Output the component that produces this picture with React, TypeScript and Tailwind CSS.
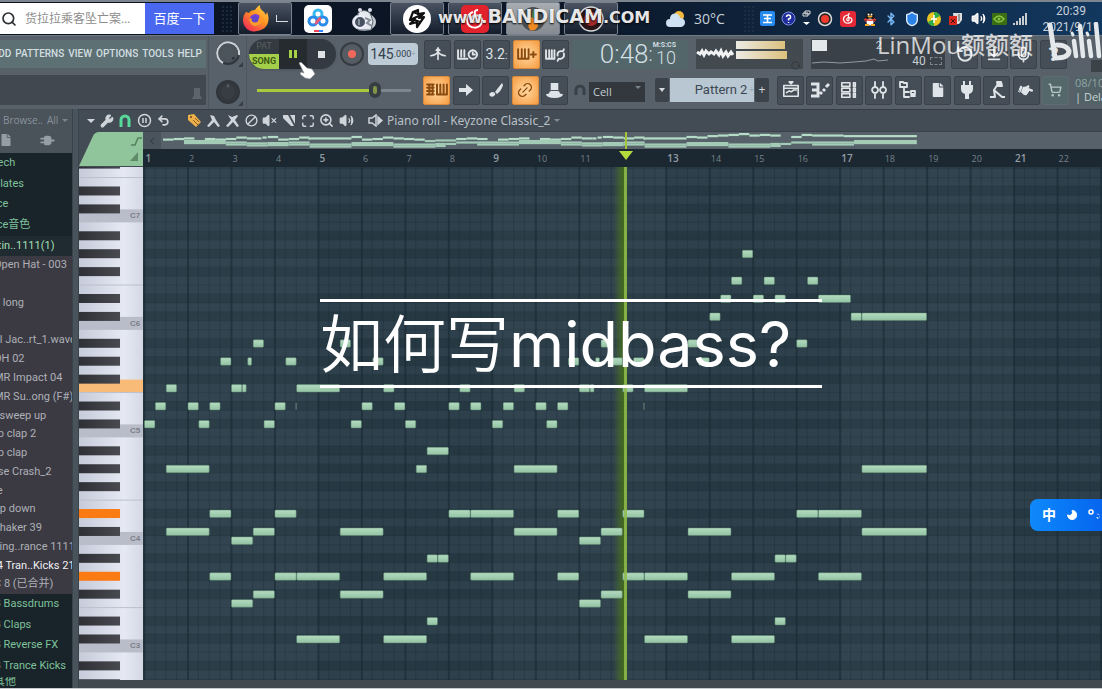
import React from "react";
import {
  Ban, Bluetooth, Circle, ChevronLeft, Link2, Maximize, Mic, Moon, RotateCcw, Search,
  ShoppingCart, Undo2, Volume2, VolumeX, Wrench, ZoomIn, Plug, Shield,
} from "lucide-react";
import { FaFile, FaHandPointRight } from "react-icons/fa";

type Note = [row: number, start: number, length: number];

const ROW = 8.96;
const UNIT = 10.87;
const ORIGIN = 1.5;
const C4_Y = 373.4;

const short = (row: number, starts: number[], length = 1): Note[] => starts.map((s) => [row, s, length]);

const notes: Note[] = [
  ...short(32, [55]),
  ...short(29, [54, 57, 61]),
  ...short(27, [53, 56, 58]), [27, 62, 3],
  ...short(25, [52, 65]), [25, 66, 6],
  ...short(22, [10, 18, 42, 50, 60]),
  ...short(20, [7, 13, 21, 39, 43, 45, 51]), ...short(20, [9.5, 41.5], 0.4),
  ...short(17, [2, 8, 22, 29, 34, 40, 44]), ...short(17, [9, 41], 0.4), ...short(17, [14, 46], 4),
  ...short(15, [1, 4, 6, 12, 20, 23, 28, 30, 33, 36, 38]), ...short(15, [13.9, 45.9], 0.12),
  ...short(13, [0, 5, 11, 19, 24, 32, 37]),
  [10, 26, 2],
  ...short(8, [2, 34], 4), [8, 25, 1], [8, 66, 6],
  ...short(3, [6, 12, 28, 38, 44, 60], 2), ...short(3, [30, 62], 4),
  ...short(1, [2, 18, 34, 50], 4), ...short(1, [10, 42], 2), [1, 66, 6],
  ...short(0, [8, 40], 2),
  ...short(-2, [26, 27, 58, 59]),
  ...short(-4, [6, 12, 38, 44], 2), ...short(-4, [14, 22, 30, 46, 54, 62], 4),
  ...short(-6, [10, 42], 2), ...short(-6, [18, 50], 4),
  ...short(-7, [8, 40], 2),
  ...short(-9, [26, 58]),
  ...short(-11, [14, 22, 46, 54], 4),
];

const rows = Array.from({ length: 60 }, (_, i) => 42 - i);
const pitch = (n: number) => ((n % 12) + 12) % 12;
const isBlack = (n: number) => [1, 3, 6, 8, 10].includes(pitch(n));
const rowTop = (n: number) => C4_Y - ROW * n - ROW / 2;
const bars = Array.from({ length: 45 }, (_, i) => i);

function Tool({ label, on, teal, children }: { label: string; on?: boolean; teal?: boolean; children: React.ReactNode }) {
  const tone = on
    ? "border-[#d98a3c] bg-radial from-[#ffd9a0] to-[#f59b3c] text-[#8a4a10]"
    : teal
      ? "border-[#5c6c70] bg-[#54676a] text-[#b9c8c8]"
      : "border-[#3a4149] bg-[#454d56] text-[#dfe4e8]";
  return (
    <button aria-label={label} className={`flex h-[29px] w-[27px] shrink-0 items-center justify-center rounded-xs border ${tone}`}>
      {children}
    </button>
  );
}

function Glyph({ d, size = 18, fill = "none" }: { d: string; size?: number; fill?: string }) {
  return (
    <svg width={size} height={size} viewBox="0 0 20 20" fill={fill} stroke="currentColor" strokeWidth="1.8" strokeLinecap="round" strokeLinejoin="round">
      <path d={d} />
    </svg>
  );
}

function Knob({ bright }: { bright?: boolean }) {
  return (
    <svg width="30" height="30" viewBox="0 0 30 30">
      <circle cx="15" cy="15" r="11" fill={bright ? "#4a525a" : "#32383e"} stroke="#30363c" strokeWidth="2" />
      {bright && <path d="M10 25A11 11 0 1 1 26 17" fill="none" stroke="#ccd3d8" strokeWidth="2" />}
      <circle cx={bright ? 20 : 15} cy={bright ? 20 : 9} r="1.5" fill={bright ? "#22272b" : "#8c949b"} />
      <circle cx="15" cy="15" r="7" fill={bright ? "#4d555d" : "#3a4047"} opacity=".7" />
      <path d="M30 24v5h-5z" fill="#363d44" />
    </svg>
  );
}

function TaskWindow({ bright, label, children }: { bright?: boolean; label: string; children: React.ReactNode }) {
  return (
    <button
      aria-label={label}
      className={`flex h-[33px] w-[54px] shrink-0 items-center justify-center rounded-xs border border-[#77808c] bg-linear-to-b ${bright ? "from-[#a8adb2] to-[#858b91]" : "from-[#4a5463] to-[#141d2b]"}`}
    >
      {children}
    </button>
  );
}

const Grip = () => (
  <svg width="10" height="28" className="shrink-0">
    {Array.from({ length: 21 }, (_, i) => (
      <circle key={i} cx={1 + (i % 3) * 4} cy={2 + Math.floor(i / 3) * 4} r="1" fill="#223244" />
    ))}
  </svg>
);

function Tray() {
  return (
    <div className="flex w-[268px] shrink-0 items-center justify-between text-white">
      <svg width="15" height="15" viewBox="0 0 15 15"><rect width="15" height="15" rx="2" fill="#2689ee" /><path d="M3 4h9M4 7.500h7M3 11.500h9M7.500 4v7" stroke="#fff" strokeWidth="1.600" /></svg>
      <svg width="15" height="15" viewBox="0 0 15 15"><circle cx="7.500" cy="7.500" r="6.500" fill="#202e9c" stroke="#7e8fe0" /><path d="M5.500 6a2 2 0 1 1 2 2v1.500M7.500 11v1" stroke="#fff" fill="none" strokeWidth="1.500" /></svg>
      <svg width="9" height="17" viewBox="0 0 9 17"><path d="M3 1h5v3H3zM1 3h5v3H1z" fill="none" stroke="#ddd" /><path d="M1 12h7l-3.500 3z" fill="#fff" /></svg>
      <svg width="16" height="16" viewBox="0 0 16 16"><circle cx="8" cy="8" r="6.500" fill="#252525" stroke="#d8d8d8" strokeWidth="1.500" /><circle cx="8" cy="8" r="4" fill="#f03a2e" /></svg>
      <svg width="16" height="16" viewBox="0 0 16 16"><rect width="16" height="16" rx="3" fill="#e32936" /><path d="M10 3c-2-1-2 1-1.500 2.500L9 9c-1 2-3 0-2-1.500S12 6 12 9s-6 5-8 1 2-6 4-6" fill="none" stroke="#fff" strokeWidth="1.200" /></svg>
      <svg width="16" height="16" viewBox="0 0 16 16"><ellipse cx="8" cy="8" rx="5" ry="7" fill="#18191c" /><ellipse cx="8" cy="11" rx="3.500" ry="3.500" fill="#fff" /><path d="M3 7q5 3 10 0v2q-5 2-10 0z" fill="#e23b2e" /><path d="M2 8l2 3M14 8l-2 3" stroke="#e23b2e" /><ellipse cx="8" cy="5.500" rx="2.500" ry="1" fill="#f5a623" /><circle cx="6.500" cy="3.500" r="1" fill="#fff" /><circle cx="9.500" cy="3.500" r="1" fill="#fff" /><path d="M3 14h4M9 14h4" stroke="#f5a623" strokeWidth="2" /></svg>
      <Bluetooth size={14} className="text-[#78b7f5]" strokeWidth={2.500} />
      <Shield size={16} fill="#2b83e6" className="text-[#e4f0ff]" />
      <svg width="16" height="16" viewBox="0 0 16 16"><circle cx="8" cy="8" r="7" fill="#e9c420" /><path d="M8 1a7 7 0 0 1 6 4L8 8zM8 15a7 7 0 0 1-6-4l6-3z" fill="#2cab48" /><path d="M8 4v8M5 8h6" stroke="#fff" strokeWidth="1.500" /></svg>
      <svg width="16" height="16" viewBox="0 0 16 16"><path d="M5 2h9v7l-3 4H6z" fill="#ddd" /><path d="M11 3v7" stroke="#555" /><rect x="1" y="5" width="8" height="9" fill="#d9281e" /><path d="M3 8l4 4M7 8l-4 4" stroke="#40100c" /></svg>
      <Volume2 size={15} fill="#e8e8e8" />
      <svg width="15" height="12" viewBox="0 0 15 12"><rect width="15" height="12" rx="1" fill="#3b6d14" /><path d="M2 6q5-6 10 0-5 6-10 0z" fill="none" stroke="#86c440" strokeWidth="1.500" /><circle cx="7" cy="6" r="1.500" fill="#86c440" /></svg>
      <svg width="15" height="12" viewBox="0 0 15 12" fill="#c8ccd0"><path d="M0 10h2v2H0zM3 8h2v4H3zM6 5h2v7H6zM9 3h2v9H9zM12 0h2v12h-2z" /></svg>
    </div>
  );
}

function Taskbar() {
  return (
    <header className="flex h-[35px] shrink-0 items-center overflow-hidden border-t-2 border-[#7d858e] bg-linear-to-r from-[#0b1422] via-[#0b1626] to-[#12385f]">
      <label className="flex h-[31px] w-[145px] shrink-0 items-center gap-2 bg-white">
        <Search size={16} className="ml-px shrink-0 text-[#2d3136]" strokeWidth={2.500} />
        <input aria-label="搜索" placeholder="货拉拉乘客坠亡案…" className="w-full min-w-0 text-xs outline-none placeholder:text-[#8d8d8d]" />
      </label>
      <button className="h-[31px] w-[69px] shrink-0 bg-[#4a68ef] text-[13px] text-white">百度一下</button>
      <div className="mr-1.5 ml-2 flex shrink-0"><Grip /></div>
      <TaskWindow label="Firefox">
        <svg width="28" height="28" viewBox="0 0 28 28">
          <defs><linearGradient id="fox" x1="1" x2="0.2" y2="1"><stop stopColor="#ffe04a" /><stop offset=".5" stopColor="#ff9022" /><stop offset="1" stopColor="#f22a58" /></linearGradient></defs>
          <path d="M4 7l3 1c1-2 3-3 6-3 1-2 3-4 5-5-.5 3 1 5 4 7 1 1 1 2 2 3l1-3c4 9 0 18-10 19C7 28 1 22 1 15c0-3 1-6 3-8z" fill="url(#fox)" />
          <circle cx="13.500" cy="15" r="6" fill="#7b3fd8" /><path d="M7 14c3-2 6-1 8 1 2-1 3-3 2-6 7 6 2 12-4 12-3 0-5-2-6-7z" fill="#ff9a28" /><circle cx="13" cy="14" r="3.500" fill="#6046cc" />
        </svg>
        <span className="ml-1.5 h-[7px] w-3 border-b border-l border-[#d8dde2]" />
      </TaskWindow>
      <div className="mx-3 flex shrink-0 items-center gap-[18px]">
        <svg width="28" height="28" viewBox="0 0 28 28"><rect width="28" height="28" rx="5" fill="#fff" /><g fill="none" strokeWidth="3"><circle cx="14" cy="9" r="4" stroke="#3bb8f0" /><circle cx="9" cy="16" r="4" stroke="#2a8be8" /><circle cx="19" cy="16" r="4" stroke="#2a8be8" /><path d="M11 18c2 1 3-4 6-5" stroke="#ef5575" /></g><path d="M10 26h5" stroke="#e45" strokeWidth="2" /><path d="M15 26h4" stroke="#38f" strokeWidth="2" /></svg>
        <svg width="28" height="28" viewBox="0 0 28 28"><ellipse cx="14" cy="17" rx="12" ry="9" fill="#c4cbd2" /><path d="M8 8q6-5 12 0l3 8-2 9H8z" fill="#e6eaee" stroke="#5b6670" /><circle cx="10" cy="17" r="6" fill="#47525e" stroke="#eef" strokeWidth="2" /><path d="M15 13l5 2-3 3 5 3M9 14v6" stroke="#87919c" strokeWidth="2" fill="none" /><circle cx="10" cy="5" r="2" fill="#dde" /><circle cx="20" cy="5" r="2" fill="#dde" /></svg>
      </div>
      <div className="flex shrink-0 gap-1">
        <TaskWindow label="CapCut"><svg width="30" height="30" viewBox="0 0 30 30"><circle cx="15" cy="15" r="14" fill="#fff" /><path d="M11 8l5-2v4l6-1-5 5 5-1-7 10v-5l-7 2 5-5-5 1z" fill="#fff" stroke="#111" strokeWidth="2.200" strokeLinejoin="round" /><path d="M11 8l8 3-9 4 8 3" fill="none" stroke="#111" strokeWidth="2" /></svg></TaskWindow>
        <TaskWindow label="Music"><svg width="28" height="28" viewBox="0 0 28 28"><rect width="28" height="28" rx="5" fill="#e2222c" /><path d="M17 5c-5 0-3 4-2 8 1 5-6 5-5 1 1-5 11-5 11 2 0 9-15 9-15-1 0-4 3-7 6-8" fill="none" stroke="#fff" strokeWidth="2" /></svg></TaskWindow>
        <TaskWindow label="FL Studio" bright><svg width="28" height="28" viewBox="0 0 28 28"><circle cx="14" cy="14" r="12" fill="#4a4f52" /><path d="M14 4l3 6-4 5z" fill="#5c9c39" /><path d="M12 12q8 3 7 9-3 6-8 4-4-5 1-13z" fill="#f08a24" /></svg></TaskWindow>
        <TaskWindow label="Recorder"><svg width="28" height="28" viewBox="0 0 28 28"><circle cx="14" cy="14" r="12" fill="#2a1416" stroke="#d5d8da" strokeWidth="1.500" /><circle cx="14" cy="14" r="7" fill="#a52a2a" /></svg></TaskWindow>
      </div>
      <svg width="20" height="18" viewBox="0 0 20 18" className="ml-12 shrink-0"><circle cx="13" cy="6" r="5" fill="#f3bb3e" /><path d="M4 17a4 4 0 0 1 0-8 5 5 0 0 1 10-1 4.500 4.500 0 0 1 1 9z" fill="#cfe2f4" /></svg>
      <span className="ml-2 w-[42px] shrink-0 text-sm text-[#c9d3dc]">30°C</span>
      <div className="mr-1.5 ml-2 flex shrink-0"><Grip /></div>
      <Tray />
      <time className="ml-2 w-[70px] shrink-0 text-center font-[Roboto,sans-serif] text-xs leading-4 whitespace-nowrap text-[#c6d0da]">20:39<br />2021/9/11</time>
    </header>
  );
}

function MenuAndHint() {
  return (
    <div className="flex w-[208px] shrink-0 flex-col justify-between py-1">
      <nav className="flex h-7 w-[206px] items-center justify-end gap-1 overflow-hidden bg-[#5d7074] pr-1 font-[Roboto,sans-serif] text-[10px] leading-4 font-medium text-[#d3dee0]">
        {["ADD", "PATTERNS", "VIEW", "OPTIONS", "TOOLS", "HELP"].map((m) => (
          <a key={m} href="#" className="shrink-0">{m}</a>
        ))}
      </nav>
      <div className="flex h-[30px] w-[206px] items-end justify-end bg-[#42484f] p-1">
        <svg width="10" height="14" viewBox="0 0 10 14"><path d="M2 1h6v7l2 4H0l2-4z" fill="#5d646b" /></svg>
      </div>
    </div>
  );
}

function TransportRow() {
  return (
    <div className="flex h-9 items-center">
      <div className="flex h-[30px] w-[87px] shrink-0 overflow-hidden rounded-full bg-[#343a41] shadow">
        <button className="flex w-[30px] flex-col justify-between text-center font-[Roboto,sans-serif] text-[9px] leading-[15px]">
          <span className="w-full text-[#59615f]">PAT</span>
          <span className="w-full bg-[#a3cf4a] font-bold text-[#3e5a14]">SONG</span>
        </button>
        <button aria-label="Pause" className="flex w-[28px] items-center justify-center gap-0.5 bg-[#262b30]">
          <span className="h-2 w-[3px] bg-[#a5d344]" /><span className="h-2 w-[3px] bg-[#a5d344]" />
        </button>
        <button aria-label="Stop" className="flex flex-1 items-center justify-center"><span className="size-[7px] bg-[#dfe3e6]" /></button>
      </div>
      <button aria-label="Record" className="ml-1 flex size-6 shrink-0 items-center justify-center rounded-full border-2 border-[#353b41] bg-[#555c63]"><span className="size-2 rounded-full bg-[#f2685a]" /></button>
      <output className="ml-1 flex h-[22px] w-[50px] shrink-0 items-center justify-center rounded bg-[#bccbd6] font-[Roboto,sans-serif] text-sm text-[#36414b]">
        145<span className="text-[9px]">.000</span><span className="text-[8px] text-[#7f909c]">÷</span>
      </output>
      <div className="ml-1.5 flex w-[145px] shrink-0 justify-between">
        <Tool label="Metronome"><Glyph d="M2 12q7-1 8-5 1 4 8 5M10 3v13M8 6l2-2 2 2" /></Tool>
        <Tool label="Wait for input"><Glyph size={21} d="M1 6v8h9M4 6v6M7 6v6M15 6a4 4 0 1 0 .1 0M15 8v2h2" /></Tool>
        <Tool label="Countdown"><span className="font-[Roboto,sans-serif] text-sm">3.2<span className="text-[10px]">:</span></span></Tool>
        <Tool label="Blend recording" on><Glyph size={21} d="M2 5v9h10V5M5.500 5v9M8.500 5v9M14 10h5M16.500 7.500v5" /></Tool>
        <Tool label="Loop recording"><Glyph size={21} d="M1 6v8h8V6M4 6v8M6.500 6v8M12 11V9q1-3 5-2l1-2M18 9v3q-2 3-5 2l-1 2" /></Tool>
      </div>
      <div className="ml-1 flex h-[29px] w-[115px] shrink-0 items-center justify-end bg-[#53666a] pr-3 font-[Roboto,sans-serif] font-light text-[#d2dfe3]">
        <span className="text-[26px] leading-7">0:48</span><span className="text-xl leading-7">:</span>
        <span className="flex flex-col items-end"><span className="text-[7px] leading-[7px] font-bold">M:S:CS</span><span className="text-lg leading-[18px]">10</span></span>
      </div>
      <div className="ml-2 flex h-[30px] w-[107px] shrink-0 items-start bg-[#42494f] py-0.5">
        <svg width="38" height="26" viewBox="0 0 38 26"><path d="M1 11l3 2 2-3 2 4 2-4 3 3 2-2 3 2 2-3 3 4 2-4 2 5 3-4 2 4 3-4 2 3" fill="none" stroke="#f0f2f3" strokeWidth="3" /></svg>
        <div className="flex flex-col gap-0.5 pl-0.5">
          <span className="h-2 w-[49px] bg-linear-to-r from-[#ecebe4] to-[#dcc07c]" />
          <span className="h-2 w-[51px] bg-linear-to-r from-[#ecebe4] to-[#dcc07c]" />
        </div>
        <Circle size={9} className="mt-5 ml-1 shrink-0 text-[#30363b]" />
      </div>
      <div className="ml-2 flex h-[30px] w-[134px] shrink-0 flex-col justify-between bg-[#3a4148] p-px pb-0.5">
        <div className="flex justify-between text-[11px] leading-3 text-[#bfc6cb]"><span className="h-[11px] w-[15px] bg-[#e3e8eb]" /><span className="mr-[62px] font-[Roboto,sans-serif]">2</span></div>
        <div className="flex items-center justify-between text-xs leading-3 text-[#c7cdd1]">
          <svg width="76" height="6"><path d="M0 5l12-1 16 1 14-1 12-1 8-2 4 2 10-1" fill="none" stroke="#929ba2" /></svg>
          <span className="ml-5 font-[Roboto,sans-serif]">40</span><span className="mr-0.5 h-2 w-3 border border-dashed border-[#7b858c]" />
        </div>
      </div>
      <div className="ml-1.5 flex w-[116px] shrink-0 justify-between">
        <Tool label="Undo"><RotateCcw size={18} strokeWidth={2.500} /></Tool>
        <Tool label="Save"><Glyph d="M10 3v9M6 9l4 4 4-4M4 16h12" /></Tool>
        <Tool label="Audio"><Mic size={17} strokeWidth={2.500} /></Tool>
        <Tool label="Help"><span className="text-xl font-bold">?</span></Tool>
      </div>
      <span className="ml-6 h-3 w-4 shrink-0 self-end bg-[#3b4248]" />
    </div>
  );
}

function PatternRow() {
  return (
    <div className="flex h-9 items-center">
      <label className="ml-2 flex h-6 w-[154px] shrink-0 items-center">
        <input type="range" aria-label="Position" defaultValue={79} className="h-[3px] w-full appearance-none bg-linear-to-r from-[#a7cb3b] from-79% to-[#7c868e] to-79% [&::-webkit-slider-thumb]:h-4 [&::-webkit-slider-thumb]:w-3 [&::-webkit-slider-thumb]:appearance-none [&::-webkit-slider-thumb]:rounded-full [&::-webkit-slider-thumb]:border-4 [&::-webkit-slider-thumb]:border-[#363d43] [&::-webkit-slider-thumb]:bg-[#829447]" />
      </label>
      <div className="ml-3 flex w-[145px] shrink-0 justify-between">
        <Tool label="Typing keyboard" on><Glyph size={22} d="M1 5h6M1 8h6M1 11h6M1 14h6M3 5v9M6 5v9M10 5v9h9V5M13 5v9M16 5v9" /></Tool>
        <Tool label="Step"><svg width="16" height="14" viewBox="0 0 16 14"><path d="M1 5h7V1l7 6-7 6V9H1z" fill="currentColor" /></svg></Tool>
        <Tool label="Slide"><svg width="16" height="16" viewBox="0 0 16 16" fill="currentColor"><path d="M2 14q-2-3 2-4 4 0 3 3-2 3-5 1zM7 10l3-4 4-5 1 2q-1 5-6 9z" /></svg></Tool>
        <Tool label="Link" on><Link2 size={18} className="-rotate-45" strokeWidth={1.800} /></Tool>
        <Tool label="Hat"><svg width="19" height="19" viewBox="0 0 20 20" fill="currentColor"><path d="M6 2h8v9h1l1 3H4l1-3h1z" /><path d="M1 14q9-3 18 0-1 4-9 4t-9-4z" /><path d="M6 10h8" stroke="#454d56" /></svg></Tool>
      </div>
      <svg width="12" height="12" viewBox="0 0 12 12" className="ml-1.5 shrink-0"><path d="M2 11V6a4 4 0 0 1 8 0v5" fill="none" stroke="#394148" strokeWidth="3" /></svg>
      <div className="relative ml-[3px] w-[56px] shrink-0">
        <select aria-label="Snap" className="h-5 w-full appearance-none bg-[#32383e] pl-1 text-[11px] text-[#c6ccd1] outline-none"><option>Cell</option></select>
        <span className="pointer-events-none absolute top-2 right-1 border-x-[3px] border-t-[3px] border-x-transparent border-t-[#7a838b]" />
      </div>
      <button aria-label="Pattern menu" className="ml-2.5 flex h-6 w-[14px] shrink-0 items-center justify-center rounded-xs bg-[#3b4249]"><span className="border-x-[3px] border-t-4 border-x-transparent border-t-[#d5dade]" /></button>
      <output className="ml-px flex h-6 w-[84px] shrink-0 items-center justify-end gap-0.5 bg-[#b8c7d2] font-[Roboto,sans-serif] text-[13px] whitespace-nowrap text-[#3c4852]">Pattern 2<span className="text-[8px] text-[#7f909c]">÷</span></output>
      <button className="ml-px flex h-6 w-[14px] shrink-0 items-center justify-center rounded-xs bg-[#3b4249] text-xs text-[#d5dade]">+</button>
      <div className="ml-2 flex w-[292px] shrink-0 justify-between">
        <Tool label="Playlist"><Glyph d="M2 5h16v12H2zM2 8h16M5 13l3-2 2 1 3-2h3M8 1h4l-2 2z" /></Tool>
        <Tool label="Piano roll"><svg width="20" height="20" viewBox="0 0 20 20" fill="none" stroke="currentColor" strokeWidth="3"><path d="M1 4h7v12H1M2 10h6M10 14l2-2M13 11l2-2M16 7l3-3" /></svg></Tool>
        <Tool label="Channel rack"><Glyph d="M2 2h9v4H2zM2 8h9v4H2zM2 14h9v4H2zM15 2h2v4h-2zM15 8h2v4h-2zM15 14h2v4h-2z" /></Tool>
        <Tool label="Mixer"><Glyph size={20} d="M6 2v5M14 2v5M6 13v5M14 13v5M6 7a3 3 0 1 0 .1 0M14 7a3 3 0 1 0 .1 0" /></Tool>
        <Tool label="Browser"><Glyph size={20} d="M2 2h3l1 1h3v4H2zM6 8v9h5M6 12h5M13 11h4v3h-4zM13 16h4" /></Tool>
        <Tool label="Project"><FaFile size={14} /></Tool>
        <Tool label="Plugins"><svg width="18" height="20" viewBox="0 0 18 20" fill="currentColor"><path d="M5 1h2v4h4V1h2v4h2v4q0 4-4 5v5H7v-5q-4-1-4-5V5h2z" /></svg></Tool>
        <Tool label="Lamp"><svg width="20" height="20" viewBox="0 0 20 20" fill="none" stroke="currentColor" strokeWidth="2" strokeLinejoin="round"><path d="M3 17h5l-1-7 4-6M7 10l8 7h3" /><path d="M10 2l4 0 1 4-4 0z" fill="currentColor" /></svg></Tool>
        <Tool label="Touch"><FaHandPointRight size={14} className="rotate-20" /></Tool>
        <Tool label="Shop" teal><ShoppingCart size={14} strokeWidth={2.500} /></Tool>
      </div>
      <p className="ml-1.5 w-[60px] shrink-0 overflow-hidden bg-[#526266] text-[11px] leading-[14px] whitespace-nowrap text-[#8fa5a6]">08/10 <br /><span className="text-[#c8d5d6]">| Delay</span></p>
    </div>
  );
}

function MainToolbar() {
  return (
    <section className="flex h-[74px] shrink-0 overflow-hidden border-t border-[#707a83] bg-[#58616a]">
      <MenuAndHint />
      <div className="flex w-[39px] shrink-0 flex-col items-center justify-between border-x border-[#4d565e] py-0.5"><Knob bright /><Knob /></div>
      <div className="ml-0.5 flex min-w-0 flex-1 flex-col"><TransportRow /><PatternRow /></div>
    </section>
  );
}

type Item = { text: string; kind: "folder" | "open" | "file" | "active" | "cut" };
const items: Item[] = [
  ...["tech", "plates", "ice", "ice音色"].map((text): Item => ({ text, kind: "folder" })),
  { text: "ftin..1111(1)", kind: "open" },
  ...["Open Hat - 003", "", "n long", "n", "el Jac..rt_1.wavc", "OH 02", "MR Impact 04", "MR Su..ong (F#)", "  sweep up", "rb clap 2", "rb clap", "rse Crash_2", " e", "ep down", "shaker 39", "king..rance 1111"].map((text): Item => ({ text, kind: "file" })),
  { text: " 4 Tran..Kicks 21", kind: "active" },
  { text: "C 8 (已合并)", kind: "file" },
  ...["B Bassdrums", "B Claps", "B Reverse FX", "B Trance Kicks"].map((text): Item => ({ text, kind: "folder" })),
  { text: "其他", kind: "cut" },
];
const itemTone = {
  folder: "flex-[11] bg-[#19242a] text-[#7fc19a]",
  open: "flex-[11] bg-[#1f2b30] text-[#a5dfb4]",
  file: "flex-[10] bg-[#3b3a43] text-[#aeb0b6]",
  active: "flex-[10] bg-[#3b3a43] text-[#f0f0f2]",
  cut: "flex-[6] bg-[#19242a] text-[#7fc19a]",
};

function Browser() {
  return (
    <aside className="flex w-[72px] shrink-0 flex-col overflow-hidden bg-[#4a525a]">
      <div className="flex h-[22px] items-center gap-1 pl-[3px] text-[10px] whitespace-nowrap text-[#89929a]">Browse.. <span>All</span><span className="border-x-[3px] border-t-[3px] border-x-transparent border-t-[#7a838b]" /></div>
      <div className="flex h-[22px] items-center gap-7 pb-1 text-[#969ea5]"><FaFile size={12} /><Plug size={15} fill="currentColor" strokeWidth={3} className="-rotate-90" /></div>
      <ul className="flex min-h-0 flex-1 flex-col font-[Roboto,Noto_Sans_CJK_SC,sans-serif] text-[11px]">
        {items.map((it, i) => (
          <li key={i} className={`flex min-h-0 items-center overflow-hidden whitespace-pre ${itemTone[it.kind]}`}>
            <span className="-ml-1.5">{it.text}</span>
          </li>
        ))}
      </ul>
    </aside>
  );
}

function RollToolbar() {
  return (
    <div className="flex h-[22px] shrink-0 items-center border-t border-[#363d44] bg-[#434b54] text-[#cfd5da]">
      <div className="ml-2 flex w-[267px] shrink-0 items-center justify-between">
        <span className="border-x-4 border-t-4 border-x-transparent border-t-[#cfd5da]" />
        <Wrench size={14} fill="currentColor" />
        <svg width="14" height="14" viewBox="0 0 14 14"><path d="M3 13V6a4 4 0 0 1 8 0v7" fill="none" stroke="#56d99a" strokeWidth="3" /></svg>
        <svg width="15" height="15" viewBox="0 0 15 15" fill="none" stroke="currentColor" strokeWidth="1.500"><circle cx="7.500" cy="7.500" r="6" /><path d="M6 5v5M9 5v5" /></svg>
        <Undo2 size={13} strokeWidth={3} />
        <span className="w-2" />
        <svg width="15" height="15" viewBox="0 0 15 15"><path d="M1 2l6-1 7 8-5 5-8-7z" fill="#eeb04a" /><path d="M6 7l5 5M8 5l4 4" stroke="#8a5f1c" /><circle cx="4" cy="4" r="1" fill="#60471c" /></svg>
        <svg width="14" height="14" viewBox="0 0 14 14" fill="currentColor"><path d="M4 1l4 1 2 4 4 6-2 1-4-5-5 5-2-1 5-6z" /></svg>
        <svg width="15" height="14" viewBox="0 0 15 14" fill="currentColor"><path d="M3 1l4 2 5-2 1 1-3 4 4 6-2 1-4-5-5 5-2-1 5-6z" /></svg>
        <Ban size={13} strokeWidth={2.500} className="rotate-90" />
        <VolumeX size={15} fill="currentColor" />
        <svg width="14" height="14" viewBox="0 0 14 14" fill="currentColor"><path d="M1 1h5l6 11H9L1 4zM8 1h5v9z" /></svg>
        <Maximize size={14} strokeWidth={2.500} />
        <ZoomIn size={15} strokeWidth={2.500} />
        <Volume2 size={15} fill="currentColor" />
      </div>
      <svg width="15" height="13" viewBox="0 0 15 13" className="ml-3.5 shrink-0" fill="none" stroke="currentColor" strokeWidth="1.500"><path d="M1 4h3l4-3v11L4 9H1z" /><path d="M10 3l4 3.500-4 3.500z" fill="currentColor" /></svg>
      <h1 className="ml-1 font-[Noto_Sans,sans-serif] text-xs whitespace-nowrap text-[#b9c1c8]">Piano roll - Keyzone Classic_2</h1>
      <span className="ml-1 border-x-[3px] border-t-[3px] border-x-transparent border-t-[#838c94]" />
    </div>
  );
}

function Keyboard() {
  return (
    <svg className="block min-h-0 w-full flex-1 bg-[#dfe3ee]">
      <defs>
        <linearGradient id="key" x2="1"><stop stopColor="#2e3036" /><stop offset="1" stopColor="#484a50" /></linearGradient>
        <linearGradient id="sheen" x2="1"><stop stopColor="#c6cbda" /><stop offset=".7" stopColor="#e6e9f3" /><stop offset="1" stopColor="#d4d8e4" /></linearGradient>
      </defs>
      <rect width="100%" height="100%" fill="url(#sheen)" />
      {rows.map((n) => (
        <g key={n}>
          {pitch(n) === 0 && <rect x="0" y={rowTop(n) - 4} width="100%" height="13" fill="#b9bdc9" />}
          {n === 17 && <rect x="0" y={rowTop(n) - 4} width="100%" height="13" fill="#f9bb78" />}
          {pitch(n) === 4 && <path d={`M0 ${rowTop(n)}h64`} stroke="#bcc0cc" />}
        </g>
      ))}
      {rows.filter(isBlack).map((n) => (
        <rect key={n} x="0" y={rowTop(n)} width="41" height="9" fill={n === 3 || n === -4 ? "#fa7a14" : "url(#key)"} />
      ))}
      {rows.filter((n) => pitch(n) === 0).map((n) => (
        <text key={n} x="51" y={rowTop(n) + 5} fontSize="8" fontWeight="bold" fill="#7b7f8a" fontFamily="Liberation Sans, sans-serif">{`C${4 + n / 12}`}</text>
      ))}
    </svg>
  );
}

function Minimap() {
  return (
    <div className="flex h-[18px] shrink-0 border-t border-[#39424a] bg-[#56616a]">
      <button aria-label="Scroll left" className="flex w-[18px] shrink-0 items-center justify-center bg-[#4a545c] text-[#2b3238]"><ChevronLeft size={12} /></button>
      <svg className="h-full min-w-0 flex-1">
        {notes.map(([n, s, l], i) => (
          <rect key={i} x={2 + s * 10.47} y={1 + (32 - n) * 0.29} width={l * 10.47} height="2.200" fill={n > 10 ? "#b5dcc6" : "#a3cbb6"} />
        ))}
        <path d="M465 0v18" stroke="#a5c63a" strokeWidth="2" />
      </svg>
    </div>
  );
}

function Ruler() {
  return (
    <svg className="block h-[18px] w-full shrink-0 bg-[#1c2831]">
      {bars.filter((b) => b !== 11).map((b) => (
        <text key={b} x={ORIGIN + b * UNIT * 4 + 1} y="13" fontSize={b % 4 ? 9 : 10} fontWeight={b % 4 ? 400 : 600} fill={b % 4 ? "#75818a" : "#929da5"} fontFamily="Open Sans, sans-serif">{b + 1}</text>
      ))}
      <path d="M476 2h14l-7 9z" fill="#b3dc3c" />
    </svg>
  );
}

function NoteGrid() {
  return (
    <svg className="block min-h-0 w-full flex-1 bg-[#2e414c]">
      <defs>
        <linearGradient id="note" x2="0" y2="1"><stop stopColor="#b4dcc0" /><stop offset="1" stopColor="#93c2a3" /></linearGradient>
        <linearGradient id="trail" x2="1"><stop stopColor="#4d7a1c" stopOpacity="0" /><stop offset="1" stopColor="#4f7c17" /></linearGradient>
      </defs>
      {rows.map((n) => (
        <rect key={n} y={rowTop(n)} width="100%" height={ROW} fill={isBlack(n) ? "#263943" : "#2d404b"} stroke="#22333d" strokeOpacity=".2" />
      ))}
      {bars.filter((b) => b % 8 === 0).map((b) => (
        <rect key={b} x={ORIGIN + b * UNIT * 4} y="0" width={UNIT * 16} height="100%" fill="#fff" opacity=".025" />
      ))}
      {Array.from({ length: 180 }, (_, i) => (
        <rect key={i} x={ORIGIN + i * UNIT - 1} y="0" width={i % 4 ? 1 : 2} height="100%" fill="#1a2a34" opacity={i % 4 ? 0.3 : 0.6} />
      ))}
      <rect x="470" y="0" width="14" height="100%" fill="url(#trail)" />
      {notes.map(([n, s, l], i) => (
        <rect key={i} x={ORIGIN + s * UNIT} y={rowTop(n) + 1} width={Math.max(l * UNIT - 0.5, 1)} height="7.500" rx="1" fill={l < 0.2 ? "#6d8a80" : "url(#note)"} stroke="#5d8570" strokeWidth={l < 0.2 ? 0 : 0.5} />
      ))}
      <rect x="481" y="0" width="3" height="100%" fill="#8fbb4b" opacity=".85" />
    </svg>
  );
}

function PianoRoll() {
  return (
    <main className="flex min-w-0 flex-1 flex-col bg-[#434b54]">
      <RollToolbar />
      <div className="flex min-h-0 flex-1">
        <div className="flex w-16 shrink-0 flex-col">
          <svg width="64" height="36" viewBox="0 0 64 36" className="shrink-0">
            <path d="M0 35L14 5q2-4 6-4h44v34z" fill="#90c49a" />
            <path d="M52 14h4l3-7h4" fill="none" stroke="#55805f" strokeWidth="1.500" /><path d="M51 30h8v-9z" fill="#5f8b69" />
          </svg>
          <Keyboard />
        </div>
        <div className="flex min-w-0 flex-1 flex-col"><Minimap /><Ruler /><NoteGrid /></div>
      </div>
      <div className="h-2 shrink-0 bg-[#42494f]" />
    </main>
  );
}

function PointerHand() {
  return (
    <svg width="18" height="18" viewBox="0 0 18 18" className="absolute top-[62px] left-[298px]">
      <path d="M1 1q2-2 4 1l4 4 5 1 3 5-5 5-5-1-5-4 1-2 3 1z" fill="#fff" stroke="#868c92" strokeWidth=".6" />
    </svg>
  );
}

function Overlays() {
  return (
    <>
      <PointerHand />
      <p className="absolute top-1 left-[438px] font-[DejaVu_Sans,sans-serif] text-[19px] leading-6 font-bold whitespace-nowrap text-white/90 [text-shadow:0_1px_2px_#000]">
        <span className="text-base">www.</span>BANDICAM<span className="text-base">.COM</span>
      </p>
      <p className="absolute top-[33px] left-[877px] font-[Open_Sans,Noto_Sans_CJK_SC,sans-serif] text-2xl leading-6 font-medium whitespace-nowrap text-white/75">LinMou额额额</p>
      <svg width="55" height="42" viewBox="0 0 55 42" className="absolute top-[22px] right-0" fill="none" stroke="#e4e8eb" strokeLinecap="round">
        <path d="M3 3l5 33q14 0 14-7-2-6-12-6" strokeWidth="5" /><path d="M27 19l2 15M33 4l3 30M42 19l2 15M49 2l3 32" strokeWidth="4.500" /><path d="M25 11l1 2M40 11l1 2" strokeWidth="3" />
      </svg>
      <h2 className="absolute top-[299px] left-[320px] w-[502px] border-y-[3px] border-white pt-1 pb-0.5 font-[Inter,Noto_Sans_CJK_SC,sans-serif] text-[63px] leading-[77px] font-[350] whitespace-nowrap text-white">如何写<span className="font-normal">midbass?</span></h2>
      <button aria-label="输入法" className="absolute top-[499px] right-0 flex h-8 w-[72px] items-center gap-2.5 rounded-l-lg bg-linear-to-r from-[#1089fb] to-[#0765ee] pl-3 text-sm font-bold text-white">
        中<Moon size={12} fill="currentColor" className="-scale-x-100" />
        <svg width="13" height="12" viewBox="0 0 13 12"><circle cx="3" cy="3" r="2" fill="none" stroke="#fff" strokeWidth="1.500" /><path d="M9 5a2 2 0 1 1-1 3h2l-1 2c4-1 4-5-1-5z" fill="#fff" /></svg>
      </button>
    </>
  );
}

export default function App() {
  return (
    <div className="relative flex h-screen flex-col overflow-hidden border-b border-[#c8cbce] bg-[#434b54] font-[Open_Sans,Noto_Sans_CJK_SC,sans-serif]">
      <Taskbar />
      <MainToolbar />
      <div className="flex min-h-0 flex-1">
        <Browser />
        <div className="w-[7px] shrink-0 border-x border-[#39434a] bg-[#48535b]" />
        <PianoRoll />
      </div>
      <Overlays />
    </div>
  );
}
